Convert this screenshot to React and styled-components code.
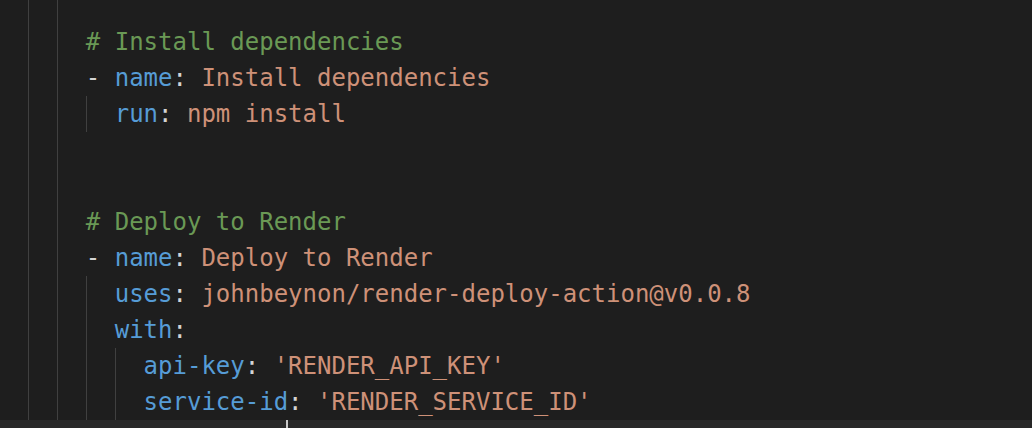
import React from "react";
import styled, { createGlobalStyle } from "styled-components";

const GUIDE = 28.9;
const ORIGIN = 28;

const Global = createGlobalStyle`
  html, body { margin: 0; padding: 0; background: #1e1e1e; }
  body { overflow: hidden; }
`;

const Editor = styled.div`
  width: 1032px;
  height: 428px;
  overflow: hidden;
  background: #1e1e1e;
  display: flex;
  flex-direction: column;
  font-family: "DejaVu Sans Mono", "Liberation Mono", monospace;
  font-size: 24px;
  color: #d4d4d4;
`;

const Line = styled.div`
  flex: none;
  height: ${(p) => p.$h || 36}px;
  line-height: 36px;
  padding-left: ${ORIGIN}px;
  white-space: pre;
  background-color: ${(p) => (p.$current ? "#282828" : "transparent")};
  background-image: repeating-linear-gradient(
    to right,
    #404040 0 1px,
    transparent 1px ${GUIDE}px
  );
  background-repeat: no-repeat;
  background-position: ${ORIGIN}px 0;
  background-size: ${(p) => p.$guides * GUIDE}px 100%;
`;

const Comment = styled.span`color: #6a9955;`;
const Key = styled.span`color: #569cd6;`;
const Str = styled.span`color: #ce9178;`;
const Punct = styled.span`color: #d4d4d4;`;

const Cursor = styled.span`
  display: inline-block;
  width: 2px;
  height: 36px;
  margin-left: -2px;
  vertical-align: top;
  background: #c8c8c8;
`;

const pad = (n) => " ".repeat(n);

export default function App() {
  return (
    <>
      <Global />
      <Editor>
        <Line $guides={2} $h={24} />
        <Line $guides={2}>
          {pad(4)}
          <Comment># Install dependencies</Comment>
        </Line>
        <Line $guides={2}>
          {pad(4)}
          <Punct>- </Punct>
          <Key>name</Key>
          <Punct>: </Punct>
          <Str>Install dependencies</Str>
        </Line>
        <Line $guides={3}>
          {pad(6)}
          <Key>run</Key>
          <Punct>: </Punct>
          <Str>npm install</Str>
        </Line>
        <Line $guides={2} />
        <Line $guides={2} />
        <Line $guides={2}>
          {pad(4)}
          <Comment># Deploy to Render</Comment>
        </Line>
        <Line $guides={2}>
          {pad(4)}
          <Punct>- </Punct>
          <Key>name</Key>
          <Punct>: </Punct>
          <Str>Deploy to Render</Str>
        </Line>
        <Line $guides={3}>
          {pad(6)}
          <Key>uses</Key>
          <Punct>: </Punct>
          <Str>johnbeynon/render-deploy-action@v0.0.8</Str>
        </Line>
        <Line $guides={3}>
          {pad(6)}
          <Key>with</Key>
          <Punct>:</Punct>
        </Line>
        <Line $guides={4}>
          {pad(8)}
          <Key>api-key</Key>
          <Punct>: </Punct>
          <Str>'RENDER_API_KEY'</Str>
        </Line>
        <Line $guides={4}>
          {pad(8)}
          <Key>service-id</Key>
          <Punct>: </Punct>
          <Str>'RENDER_SERVICE_ID'</Str>
        </Line>
        <Line $guides={0} $current>
          {pad(18)}
          <Cursor />
        </Line>
      </Editor>
    </>
  );
}
